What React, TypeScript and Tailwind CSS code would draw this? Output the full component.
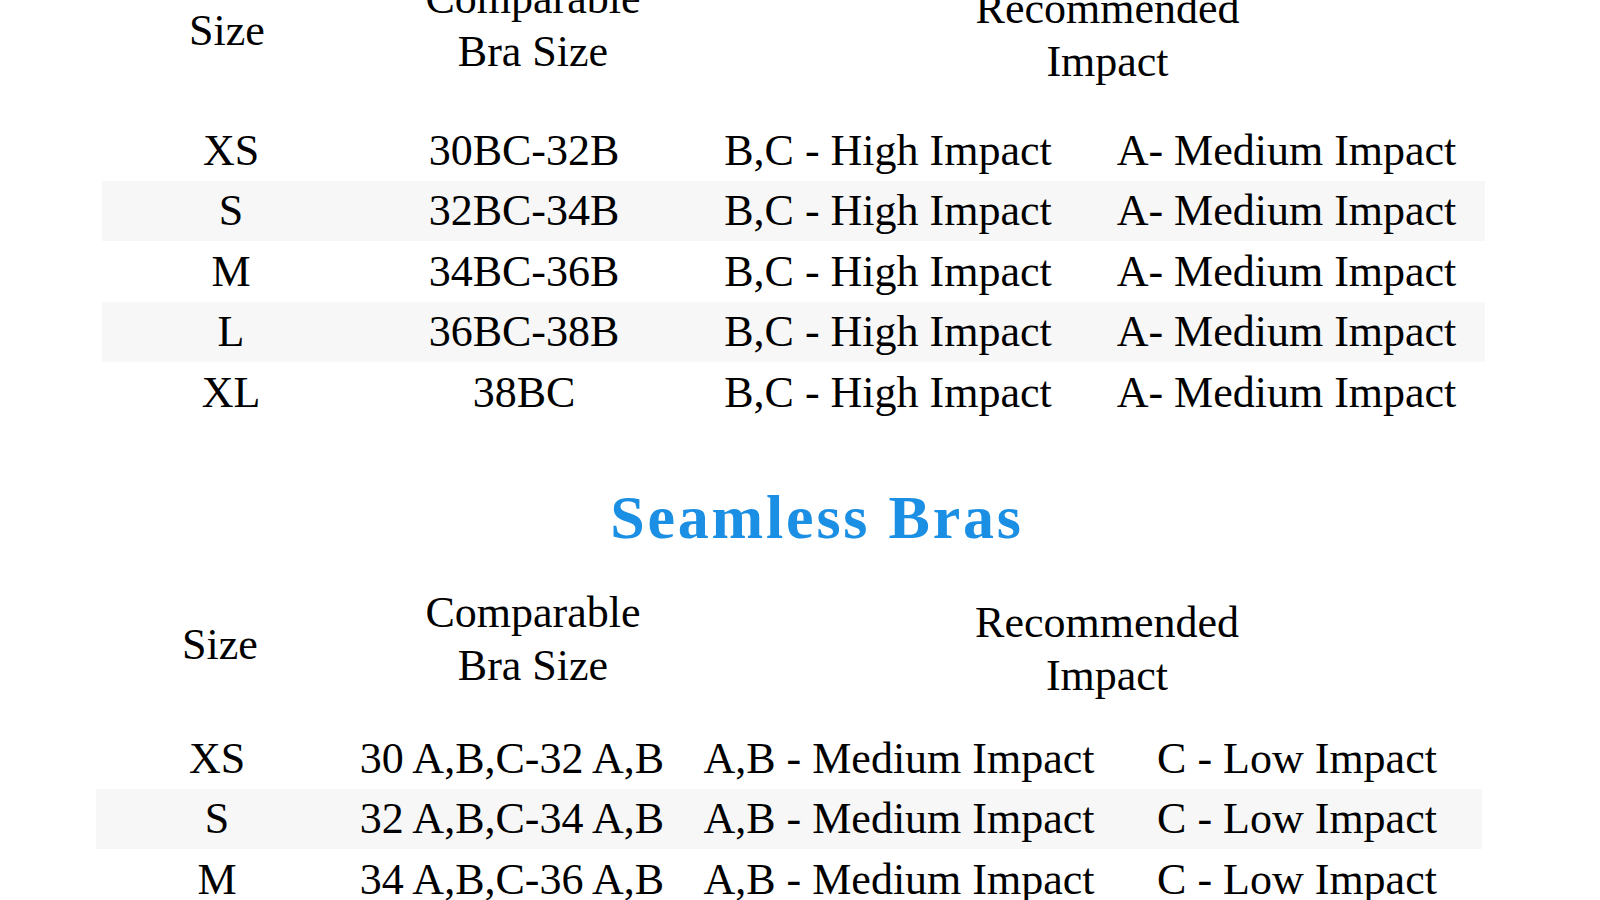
import React from "react";

const rows1: [string, string, string, string][] = [
  ["XS", "30BC-32B", "B,C - High Impact", "A- Medium Impact"],
  ["S", "32BC-34B", "B,C - High Impact", "A- Medium Impact"],
  ["M", "34BC-36B", "B,C - High Impact", "A- Medium Impact"],
  ["L", "36BC-38B", "B,C - High Impact", "A- Medium Impact"],
  ["XL", "38BC", "B,C - High Impact", "A- Medium Impact"],
];

const rows2: [string, string, string, string][] = [
  ["XS", "30 A,B,C-32 A,B", "A,B - Medium Impact", "C - Low Impact"],
  ["S", "32 A,B,C-34 A,B", "A,B - Medium Impact", "C - Low Impact"],
  ["M", "34 A,B,C-36 A,B", "A,B - Medium Impact", "C - Low Impact"],
];

function Rows({ rows, w }: { rows: [string, string, string, string][]; w: number[] }) {
  return (
    <div className="flex flex-col">
      {rows.map((r, i) => (
        <div
          key={i}
          className={
            "flex h-[60.5px] items-center whitespace-nowrap text-[44px] leading-[53px] " +
            (i % 2 === 1 ? "bg-[#f7f7f7]" : "bg-white")
          }
        >
          {r.map((c, j) => (
            <div key={j} className="text-center" style={{ width: w[j] }}>
              {c}
            </div>
          ))}
        </div>
      ))}
    </div>
  );
}

export default function App() {
  return (
    <div className="h-screen w-full overflow-hidden bg-white text-black font-['Liberation_Serif','Times_New_Roman',serif]">
      <div className="mt-[-28.5px]">
        {/* Table 1 */}
        <div className="ml-[102px] w-[1383px]">
          <div className="flex h-[148.5px] whitespace-nowrap text-[44px] leading-[53px]">
            <div className="w-[258px] pt-[32px] pr-[8px] text-center">Size</div>
            <div className="w-[328px] pl-[18px] text-center">
              Comparable
              <br />
              Bra Size
            </div>
            <div className="flex-1 pl-[42px] pt-[10px] text-center">
              Recommended
              <br />
              Impact
            </div>
          </div>
          <Rows rows={rows1} w={[258, 328, 400, 397]} />
        </div>

        {/* Title */}
        <div className="mt-[59.5px] h-[70px] pl-[34px] text-center text-[62px] font-bold leading-[70px] tracking-[2.8px] text-[#1a8fe3]">
          Seamless Bras
        </div>

        {/* Table 2 */}
        <div className="ml-[96px] mt-[33.5px] w-[1386px]">
          <div className="flex h-[142.5px] whitespace-nowrap text-[44px] leading-[53px]">
            <div className="w-[242px] pt-[32px] pl-[6px] text-center">Size</div>
            <div className="w-[348px] pl-[42px] text-center">
              Comparable
              <br />
              Bra Size
            </div>
            <div className="flex-1 pl-[46px] pt-[10px] text-center">
              Recommended
              <br />
              Impact
            </div>
          </div>
          <Rows rows={rows2} w={[242, 348, 426, 370]} />
        </div>
      </div>
    </div>
  );
}
